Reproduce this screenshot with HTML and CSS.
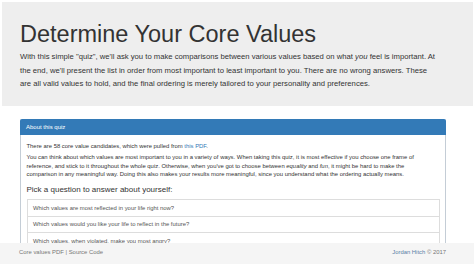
FILE: index.html
```html
<!DOCTYPE html>
<html lang="en">
<head>
<meta charset="utf-8">
<title>Determine Your Core Values</title>
<link rel="stylesheet" href="styles.css">
</head>
<body>
<header class="jumbotron">
  <div class="jumbo-inner">
    <h1 class="title">Determine Your Core Values</h1>
    <p class="lead">With this simple "quiz", we'll ask you to make comparisons between various values based on what <em>you</em> feel is important. At the end, we'll present the list in order from most important to least important to you. There are no wrong answers. These are all valid values to hold, and the final ordering is merely tailored to your personality and preferences.</p>
  </div>
</header>
<main class="container">
  <section class="panel">
    <div class="panel-heading">About this quiz</div>
    <div class="panel-body">
      <p class="intro">There are 58 core value candidates, which were pulled from <a class="link" href="#">this PDF</a>.</p>
      <p class="intro">You can think about which values are most important to you in a variety of ways. When taking this quiz, it is most effective if you choose one frame of reference, and stick to it throughout the whole quiz. Otherwise, when you've got to choose between <em>equality</em> and <em>fun</em>, it might be hard to make the comparison in any meaningful way. Doing this also makes your results more meaningful, since you understand what the ordering actually means.</p>
      <h3 class="pick">Pick a question to answer about yourself:</h3>
      <ul class="list-group">
        <li class="list-item">Which values are most reflected in your life right now?</li>
        <li class="list-item">Which values would you like your life to reflect in the future?</li>
        <li class="list-item">Which values, when violated, make you most angry?</li>
      </ul>
    </div>
  </section>
</main>
<footer class="footer">
  <span class="footer-left"><a class="flink" href="#">Core values PDF</a> | <a class="flink" href="#">Source Code</a></span>
  <span class="footer-right"><a class="flink" href="#">Jordan Hitch</a> © 2017</span>
</footer>
</body>
</html>
```
FILE: styles.css
```css
html, body {
  margin: 0;
  padding: 0;
  overflow: hidden;
  background: #fff;
}
body {
  font-family: "Liberation Sans", Arial, sans-serif;
  color: #333;
  padding-top: 2px;
}
.jumbotron {
  background: #eee;
  margin: 0 1px 0 2px;
  padding: 20px 0 0 18px;
  height: 84px;
}
.jumbo-inner {
  width: 418px;
}
.title {
  margin: 0;
  font-size: 23.5px;
  font-weight: normal;
  line-height: 25px;
  color: #333;
}
.lead {
  margin: 3.25px 0 0;
  font-size: 7.7px;
  line-height: 13.5px;
  color: #333;
}
.container {
  width: 426px;
  margin: 13px 0 0 20px;
}
.panel {
  border: 1px solid #c4cdd6;
  border-top: none;
  border-radius: 2px;
  background: #fff;
}
.panel-heading {
  background: #337ab7;
  color: #fff;
  height: 16px;
  line-height: 16px;
  padding: 0 6px;
  font-size: 6px;
  border-radius: 2px 2px 0 0;
  margin: 0 -1px;
}
.panel-body {
  padding: 7px 5.5px 20px;
  font-size: 5.9px;
  line-height: 8.5px;
}
.intro {
  margin: 0 0 2.5px;
  max-width: 400px;
}
.link {
  color: #337ab7;
  text-decoration: none;
}
.pick {
  margin: 6px 0 5.5px;
  font-size: 8px;
  line-height: 9px;
  font-weight: normal;
}
.list-group {
  list-style: none;
  margin: 0;
  padding: 0;
}
.list-item {
  border: 1px solid #ddd;
  margin-bottom: -1px;
  padding: 3.5px 5.5px;
  color: #555;
  line-height: 8.5px;
}
.footer {
  position: fixed;
  left: 0;
  right: 0;
  bottom: 0;
  height: 21px;
  background: #f5f5f5;
  display: flex;
  justify-content: space-between;
  padding: 5px 28px 0 19px;
  box-sizing: border-box;
  font-size: 5.9px;
  line-height: 8px;
  color: #777;
}
.flink {
  color: #777;
  text-decoration: none;
}
.footer-right .flink {
  color: #5a7fa6;
}
```
